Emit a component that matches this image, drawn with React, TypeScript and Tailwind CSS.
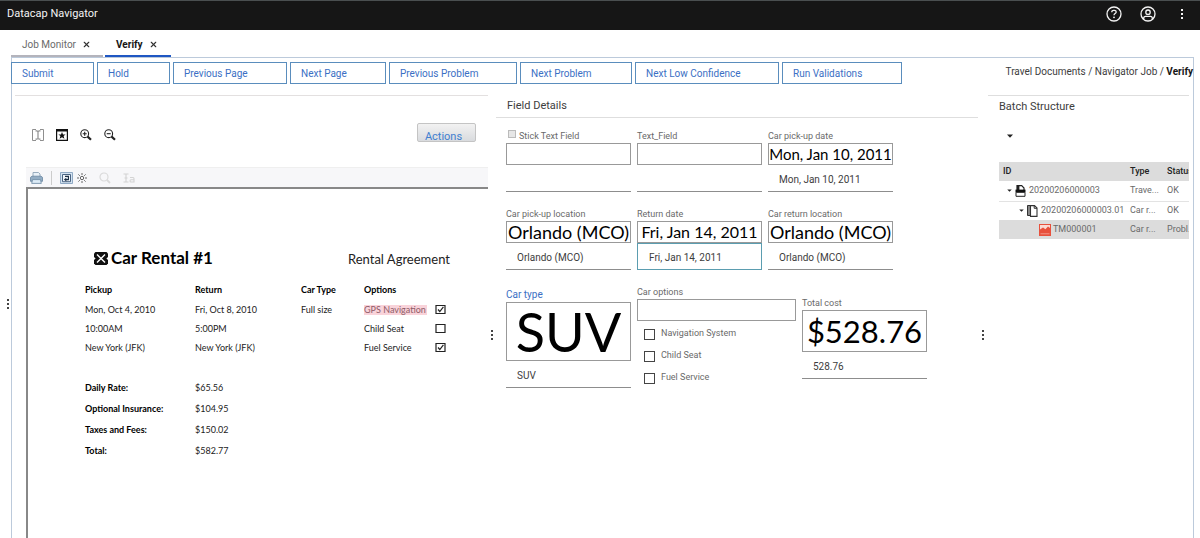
import { useState } from 'react';
import type { ReactNode } from 'react';
import { X } from 'lucide-react';

const toolbarButtons = [
  { label: 'Submit', width: 'w-[83px]' },
  { label: 'Hold', width: 'w-[73px]' },
  { label: 'Previous Page', width: 'w-[114px]' },
  { label: 'Next Page', width: 'w-[96px]' },
  { label: 'Previous Problem', width: 'w-[128px]' },
  { label: 'Next Problem', width: 'w-[112px]' },
  { label: 'Next Low Confidence', width: 'w-[144px]' },
  { label: 'Run Validations', width: 'w-[120px]' },
];

const rentalRows = [
  { pickup: 'Mon, Oct 4, 2010', back: 'Fri, Oct 8, 2010', type: 'Full size', option: 'GPS Navigation', checked: true },
  { pickup: '10:00AM', back: '5:00PM', type: '', option: 'Child Seat', checked: false },
  { pickup: 'New York (JFK)', back: 'New York (JFK)', type: '', option: 'Fuel Service', checked: true },
];

const rentalTotals = [
  { label: 'Daily Rate:', value: '$65.56' },
  { label: 'Optional Insurance:', value: '$104.95' },
  { label: 'Taxes and Fees:', value: '$150.02' },
  { label: 'Total:', value: '$582.77' },
];

/* ---------- Icons ---------- */

function HelpIcon() {
  return (
    <svg width="16" height="16" viewBox="0 0 16 16" fill="none" stroke="#f4f4f4" strokeWidth="1.3">
      <circle cx="8" cy="8" r="7" />
      <path d="M5.8 6.2V6c0-1 .8-1.7 1.8-1.7h.7c1.1 0 1.9.7 1.9 1.7 0 1.5-2.2 1.5-2.2 3.2" />
      <circle cx="8" cy="11.3" r=".9" fill="#f4f4f4" stroke="none" />
    </svg>
  );
}

function UserIcon() {
  return (
    <svg width="16" height="16" viewBox="0 0 16 16" fill="none" stroke="#f4f4f4" strokeWidth="1.3">
      <circle cx="8" cy="8" r="7" />
      <circle cx="8" cy="6.2" r="2.2" />
      <path d="M3.7 13.2v-1c0-1.1.8-1.9 1.9-1.9h4.8c1.1 0 1.9.8 1.9 1.9v1" />
    </svg>
  );
}

function DotsIcon({ color = '#444' }: { color?: string }) {
  return (
    <svg width="4" height="14" viewBox="0 0 4 14" fill={color}>
      <rect x="1" y="2" width="2" height="2" />
      <rect x="1" y="6" width="2" height="2" />
      <rect x="1" y="10" width="2" height="2" />
    </svg>
  );
}

function SplitIcon() {
  return (
    <svg width="12" height="12" viewBox="0 0 12 12" fill="none" stroke="#8f8f8f">
      <path d="M4 .5H.5v11H4M8 .5h3.5v11H8" />
      <path d="M3.5 1.8h1.3l1.2.8 1.2-.8h1.3M3.5 10.2h1.3l1.2-.8 1.2.8h1.3M6 2.5v7" strokeWidth="1.2" />
    </svg>
  );
}

function StarWindowIcon() {
  return (
    <svg width="12" height="12" viewBox="0 0 12 12">
      <path d="M.6 .6h10.8v10.8H.6z" fill="none" stroke="#111" strokeWidth="1.2" />
      <path d="M0 0h12v2.5H0z" fill="#111" />
      <path d="m6 3 1 2.4h2.6L7.6 7l.8 2.8L6 8.3 3.6 9.8 4.4 7l-2-1.6H5z" fill="#111" />
    </svg>
  );
}

function MagnifierIcon({ plus }: { plus: boolean }) {
  return (
    <svg width="12" height="12" viewBox="0 0 12 12" fill="none" stroke="#222">
      <circle cx="4.7" cy="4.7" r="3.9" strokeWidth="1.1" />
      <path d="m7.6 7.6 3.4 3.2" strokeWidth="2.2" />
      <path d={plus ? 'M2.7 4.7h4M4.7 2.7v4' : 'M2.7 4.7h4'} strokeWidth="1.1" />
    </svg>
  );
}

function PrintIcon() {
  return (
    <svg width="13" height="12" viewBox="0 0 13 12">
      <path d="M3 5V.5h5.5l1.5 1.5v3" fill="#e9f1f8" stroke="#8fa5b8" strokeWidth=".9" />
      <path d="M.5 5.3 2 4.2h9l1.5 1.1v4h-12z" fill="#93adc4" stroke="#6a87a1" strokeWidth=".8" />
      <path d="M2.5 7.6h8l.8 3.8H1.7z" fill="#dcebf6" stroke="#6785a0" strokeWidth=".8" />
    </svg>
  );
}

function RotateFrameIcon() {
  return (
    <svg width="13" height="12" viewBox="0 0 13 12" fill="none">
      <path d="M.5 .5h12v11H.5z" fill="#d5e4f2" stroke="#8fa9c4" />
      <path d="M2.5 2.5h8v7.2h-8z" fill="#eef4fa" stroke="#4a6482" />
      <path d="M5 4.3h3.4v3.4H6" stroke="#1d2f45" strokeWidth="1.2" />
      <path d="M6.3 5.8v3.6L3.9 7.6z" fill="#1d2f45" />
    </svg>
  );
}

function BrightnessIcon() {
  return (
    <svg width="10" height="10" viewBox="0 0 10 10" fill="none" stroke="#555" strokeWidth=".9">
      <circle cx="5" cy="5" r="1.7" />
      <path d="M5 0v2M5 8v2M0 5h2M8 5h2M1.4 1.4l1.4 1.4M7.2 7.2l1.4 1.4M8.6 1.4 7.2 2.8M2.8 7.2 1.4 8.6" />
    </svg>
  );
}

function FaintSearchIcon() {
  return (
    <svg width="12" height="12" viewBox="0 0 12 12" fill="none" stroke="#dadada">
      <circle cx="5" cy="5" r="4" strokeWidth="1.2" />
      <path d="m8 8 3 3" strokeWidth="1.8" />
    </svg>
  );
}

function FaintTextIcon() {
  return (
    <svg width="12" height="10" viewBox="0 0 12 10" fill="none" stroke="#d4d4d4" strokeWidth="1.1">
      <path d="M.5 1h5M3 1v8M.5 9h5M1.5 5h3" />
      <path d="M7 4.5h3c.7 0 1 .4 1 1V9H8c-.7 0-1-.3-1-1s.3-1.2 1-1.2h3" />
    </svg>
  );
}

function LogoIcon() {
  return (
    <svg width="14" height="13" viewBox="0 0 14 13">
      <path d="M1.5 0h11L14 1.5v10L12.5 13h-11L0 11.5v-10z" fill="#111" />
      <path d="m3 2.5 8 8M11 2.5l-8 8" stroke="#fff" strokeWidth="1.4" />
      <path d="M0 5l1.6 1.5L0 8zM14 5l-1.6 1.5L14 8z" fill="#fff" />
    </svg>
  );
}

function CaretIcon({ large }: { large?: boolean }) {
  return (
    <svg width={large ? 6 : 5} height={large ? 4 : 3} viewBox="0 0 6 4" className="shrink-0">
      <path d="M0 .5h6L3 3.8z" fill="#222" />
    </svg>
  );
}

function BatchIcon() {
  return (
    <svg width="11" height="12" viewBox="0 0 11 12" className="shrink-0">
      <path d="M2 5V.7h4.7L9 3v2" fill="#fff" stroke="#222" strokeWidth="1.2" />
      <path d="M2 .7h2.4V5H2z" fill="#222" />
      <path d="M.5 4.6h10v3.2H.5z" fill="#111" />
      <path d="M1 8v3.3h9V8" fill="#fff" stroke="#222" />
    </svg>
  );
}

function DocumentIcon() {
  return (
    <svg width="11" height="12" viewBox="0 0 11 12" className="shrink-0" fill="#fff" stroke="#333">
      <path d="M.5 .5h3v10h-3z" fill="#888" />
      <path d="M3.5 .6h4L10 3.1v8.3H3.5z" strokeWidth="1.1" />
      <path d="M7.2 .8v2.5H10" fill="none" />
    </svg>
  );
}

function ImageIcon() {
  return (
    <svg width="12" height="12" viewBox="0 0 12 12" className="shrink-0">
      <path d="M0 0h12v12H0z" fill="#e8503c" />
      <path d="M1 1h10v3L9 2.6 6.4 5.2 4 3.4 1 5.6z" fill="#fbd9d3" />
      <path d="M1.5 9.8h9" stroke="#f6a99d" strokeWidth=".8" />
    </svg>
  );
}

/* ---------- Shared pieces ---------- */

function Splitter() {
  return (
    <div className="flex items-center justify-center pt-9">
      <DotsIcon />
    </div>
  );
}

interface FieldProps {
  id: string;
  label: string;
  snippet?: string;
  value?: string;
  active?: boolean;
  highlight?: boolean;
  boxClass?: string;
  className?: string;
  extra?: ReactNode;
}

function Field({ id, label, snippet, value = '', active, highlight, boxClass, className, extra }: FieldProps) {
  return (
    <div className={`w-[125px] ${className ?? ''}`}>
      <div className="flex h-3.5 items-center gap-[3px]">
        {extra}
        <label htmlFor={id} className={highlight ? 'text-[10px] leading-3 text-[#3b6fc4]' : 'text-[9px] leading-3 text-[#6a6a6a]'}>
          {label}
        </label>
      </div>
      <div
        className={`flex items-center justify-center border border-[#999] font-[Lato] leading-none whitespace-nowrap text-black ${boxClass ?? 'h-[22px] text-[16px]'}`}
      >
        {snippet}
      </div>
      <input
        id={id}
        defaultValue={value}
        className={`block h-[27px] w-full px-[11px] pt-0.5 text-[10px] text-[#3d3d3d] outline-none ${active ? 'border border-[#5b9db0]' : 'border-b border-[#8d8d8d]'}`}
      />
    </div>
  );
}

function ScannedPage() {
  return (
    <div className="flex-1 border-t-2 border-l-2 border-[#888] pt-14 pl-[57px] font-[Lato] text-[9px] text-[#222]">
      <div className="flex items-center">
        <h2 className="flex w-[263px] items-center gap-[3px] pl-[9px] text-[17px] leading-6 font-bold text-black">
          <LogoIcon />
          Car Rental #1
        </h2>
        <span className="pt-0.5 text-[13px] leading-6">Rental Agreement</span>
      </div>
      <table className="mt-[9px] table-fixed text-left">
        <thead>
          <tr className="h-5 font-bold text-black">
            <th className="w-[110px]">Pickup</th>
            <th className="w-[106px]">Return</th>
            <th className="w-[63px]">Car Type</th>
            <th className="w-[71px]">Options</th>
            <th className="w-3" />
          </tr>
        </thead>
        <tbody>
          {rentalRows.map((row) => (
            <tr key={row.option} className="h-[19px]">
              <td>{row.pickup}</td>
              <td>{row.back}</td>
              <td>{row.type}</td>
              <td>
                {row.option === 'GPS Navigation' ? (
                  <span className="block w-[63px] bg-[#f9d3da] leading-[10px] whitespace-nowrap text-[#8f5c68]">{row.option}</span>
                ) : (
                  row.option
                )}
              </td>
              <td>
                <svg width="11" height="11" viewBox="0 0 11 11" fill="none" stroke="#222" strokeWidth="1.2">
                  <path d="M1 1.5h9v8H1z" />
                  {row.checked && <path d="m3 5.5 1.8 2 3.6-4.7" />}
                </svg>
              </td>
            </tr>
          ))}
        </tbody>
      </table>
      <table className="mt-5 table-fixed text-left">
        <tbody>
          {rentalTotals.map((row) => (
            <tr key={row.label} className="h-[21px]">
              <th className="w-[110px] font-bold text-black">{row.label}</th>
              <td>{row.value}</td>
            </tr>
          ))}
        </tbody>
      </table>
    </div>
  );
}

function ViewerPanel() {
  return (
    <section className="ml-[3px] flex flex-col border-t border-[#e3e0e0]">
      <div className="flex h-[71px] items-center justify-between pr-3 pl-[17px]">
        <div className="flex items-center gap-3 pt-1.5">
          <button aria-label="Split view"><SplitIcon /></button>
          <button aria-label="Favorite view"><StarWindowIcon /></button>
          <button aria-label="Zoom in"><MagnifierIcon plus /></button>
          <button aria-label="Zoom out"><MagnifierIcon plus={false} /></button>
        </div>
        <button className="mt-0.5 h-[19px] w-[59px] rounded-xs border border-[#c4c4c4] bg-linear-to-b from-[#f2f2f2] to-[#d9dbde] pt-2 pr-1.5 text-[11px] leading-[10px] text-[#3f7fd0]">
          Actions
        </button>
      </div>
      <div className="ml-[11px] flex flex-1 flex-col">
        <div className="flex h-5 items-center border-t border-[#efefef] bg-[#f7f7f9] pl-1">
          <button aria-label="Print"><PrintIcon /></button>
          <span className="mx-2 h-3.5 w-px bg-[#ccc]" />
          <button aria-label="Rotate" className="mr-1"><RotateFrameIcon /></button>
          <button aria-label="Brightness" className="mr-3"><BrightnessIcon /></button>
          <button aria-label="Find" className="mr-3"><FaintSearchIcon /></button>
          <button aria-label="Text"><FaintTextIcon /></button>
        </div>
        <ScannedPage />
      </div>
    </section>
  );
}

function FieldDetailsPanel() {
  return (
    <section>
      <h2 className="flex h-[23px] items-center border-b border-[#dedede] pl-[11px] text-[11px] text-[#3d3d3d]">Field Details</h2>
      <div className="flex gap-1.5 pt-[11px] pl-2.5">
        <Field
          id="stick"
          label="Stick Text Field"
          extra={
            <input
              type="checkbox"
              aria-label="Stick"
              className="mb-1 ml-0.5 size-2 appearance-none border border-[#bbb] bg-[#e6e6e6]"
            />
          }
        />
        <Field id="text" label="Text_Field" />
        <Field id="pickup-date" label="Car pick-up date" snippet="Mon, Jan 10, 2011" value="Mon, Jan 10, 2011" boxClass="h-[22px] text-[15px]" />
      </div>
      <div className="flex gap-1.5 pt-[15px] pl-2.5">
        <Field id="pickup-loc" label="Car pick-up location" snippet="Orlando (MCO)" value="Orlando (MCO)" boxClass="h-[22px] text-[18px]" />
        <Field id="return-date" label="Return date" snippet="Fri, Jan 14, 2011" value="Fri, Jan 14, 2011" active />
        <Field id="return-loc" label="Car return location" snippet="Orlando (MCO)" value="Orlando (MCO)" boxClass="h-[22px] text-[18px]" />
      </div>
      <div className="flex items-start gap-1.5 pt-[15px] pl-2.5">
        <Field id="car-type" label="Car type" snippet="SUV" value="SUV" highlight boxClass="h-[59px] text-[54px]" className="mt-[3px]" />
        <fieldset className="w-[159px]">
          <label htmlFor="car-options" className="block text-[9px] leading-[14px] text-[#6a6a6a]">Car options</label>
          <input id="car-options" className="mb-0.5 block h-[22px] w-full border border-[#999] px-2 text-[10px] outline-none" />
          {['Navigation System', 'Child Seat', 'Fuel Service'].map((option) => (
            <label key={option} className="flex h-[22px] items-center gap-1.5 pl-[7px] text-[9px] text-[#6a6a6a]">
              <input type="checkbox" className="size-[11px] appearance-none border border-[#444] checked:bg-[#444]" />
              {option}
            </label>
          ))}
        </fieldset>
        <Field id="total" label="Total cost" snippet="$528.76" value="528.76" boxClass="h-[42px] text-[31px]" className="mt-[11px]" />
      </div>
    </section>
  );
}

function BatchPanel() {
  return (
    <section className="mr-1 min-w-0 border-t border-[#dedede]">
      <h2 className="flex h-[22px] items-center pl-[11px] text-[11px] text-[#3d3d3d]">Batch Structure</h2>
      <button aria-label="Batch menu" className="mt-2 ml-[19px] flex h-5 items-center">
        <CaretIcon large />
      </button>
      <div className="mt-4 ml-[11px] overflow-hidden">
        <table className="w-full table-fixed text-left text-[9px] whitespace-nowrap text-[#6a6a6a]">
          <thead>
            <tr className="h-[19px] bg-[#dcdcdc] text-[#222]">
              <th className="pl-1 font-medium">ID</th>
              <th className="w-[37px] font-medium">Type</th>
              <th className="w-[22px] overflow-hidden font-medium">Status</th>
            </tr>
          </thead>
          <tbody>
            <tr className="h-5 border-b border-[#e3e3e3]">
              <td className="overflow-hidden">
                <span className="flex items-center gap-[3px] pl-2"><CaretIcon /><BatchIcon />20200206000003</span>
              </td>
              <td>Trave...</td>
              <td>OK</td>
            </tr>
            <tr className="h-[19px]">
              <td className="overflow-hidden">
                <span className="flex items-center gap-[3px] pl-5"><CaretIcon /><DocumentIcon />20200206000003.01</span>
              </td>
              <td>Car r...</td>
              <td>OK</td>
            </tr>
            <tr className="h-[19px] bg-[#dcdcdc]">
              <td className="overflow-hidden">
                <span className="flex items-center gap-0.5 pl-10"><ImageIcon />TM000001</span>
              </td>
              <td>Car r...</td>
              <td className="overflow-hidden">Probl...</td>
            </tr>
          </tbody>
        </table>
      </div>
    </section>
  );
}

export default function App() {
  const [activeTab, setActiveTab] = useState('Verify');

  return (
    <div className="flex min-h-screen flex-col bg-white font-[Roboto,sans-serif] text-[#3d3d3d]">
      <header className="flex h-[30px] items-center justify-between border-t border-[#4a4f50] bg-[#161616] pr-4 pb-[3px] pl-[7px]">
        <h1 className="text-[11px] text-[#f4f4f4]">Datacap Navigator</h1>
        <div className="flex items-center gap-[18px]">
          <button aria-label="Help"><HelpIcon /></button>
          <button aria-label="Account"><UserIcon /></button>
          <button aria-label="More" className="ml-1.5"><DotsIcon color="#f4f4f4" /></button>
        </div>
      </header>

      <nav className="ml-[11px] flex h-[27px] gap-0.5">
        {['Job Monitor', 'Verify'].map((tab) => (
          <div
            key={tab}
            className={`flex items-center border-b-2 pt-1 pl-[11px] text-[10px] ${
              activeTab === tab ? 'w-[66px] border-[#1f57c3] font-bold text-[#161616]' : 'w-[92px] border-[#b4b4bc] text-[#6a6a6a]'
            }`}
          >
            <button onClick={() => setActiveTab(tab)}>{tab}</button>
            <button aria-label={`Close ${tab}`} className="ml-1.5">
              <X size={9} strokeWidth={3} className="text-[#333]" />
            </button>
          </div>
        ))}
      </nav>

      <div className="flex flex-1">
        <div className="flex w-[11px] items-center justify-center pt-3 pl-1">
          <DotsIcon />
        </div>
        <main className="mr-1.5 flex min-w-0 flex-1 flex-col border-x border-t border-[#bccadb]">
          <div className="flex items-start justify-between pt-1">
            <div className="-ml-px flex gap-[3px]">
              {toolbarButtons.map((button) => (
                <button
                  key={button.label}
                  className={`h-[22px] border border-[#5a8dbd] pl-2.5 text-left text-[10px] whitespace-nowrap text-[#3b6fc4] ${button.width}`}
                >
                  {button.label}
                </button>
              ))}
            </div>
            <p className="pt-0.5 text-[10px] whitespace-nowrap">
              Travel Documents / Navigator Job / <span className="font-bold text-[#161616]">Verify</span>
            </p>
          </div>
          <div className="mt-[11px] grid flex-1 grid-cols-[476fr_8px_482fr_10px_205fr]">
            <ViewerPanel />
            <Splitter />
            <FieldDetailsPanel />
            <Splitter />
            <BatchPanel />
          </div>
        </main>
      </div>
    </div>
  );
}
